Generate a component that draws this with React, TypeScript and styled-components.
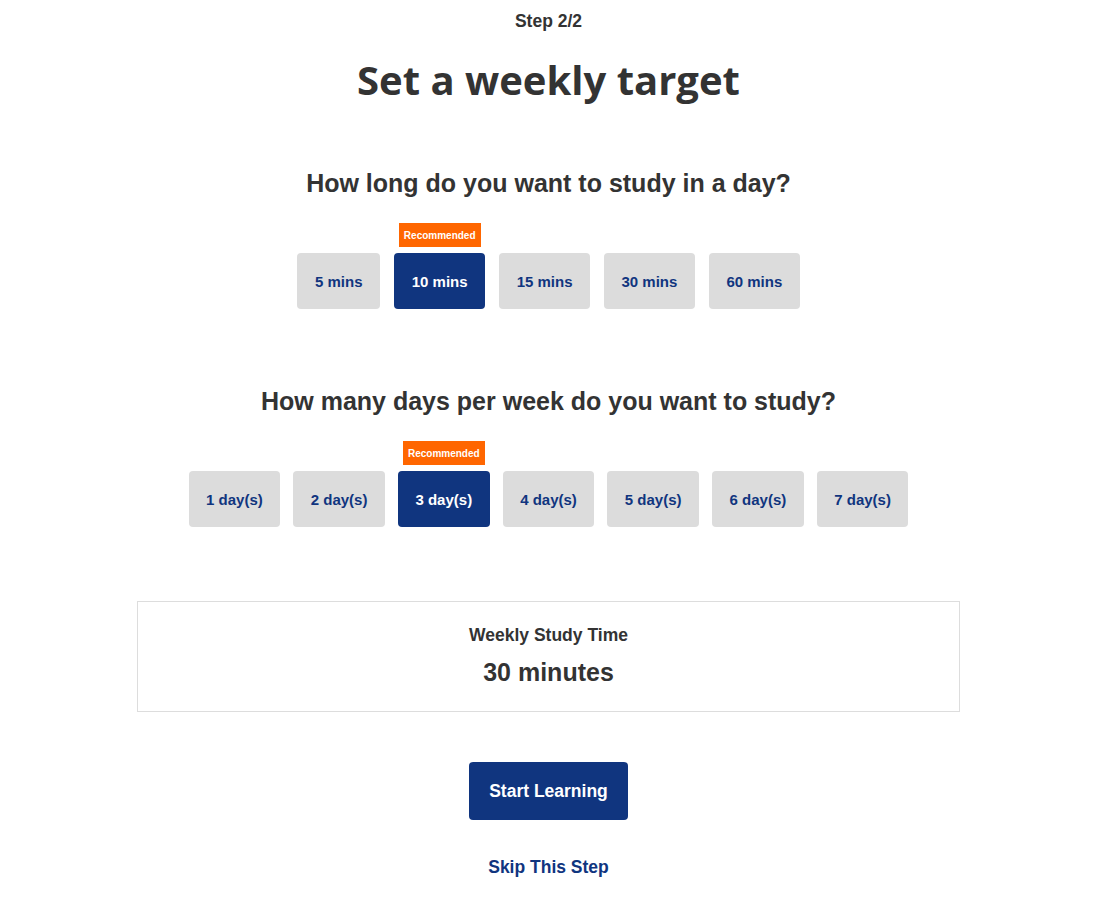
import React, { useState } from "react";
import styled, { createGlobalStyle } from "styled-components";

const NAVY = "#10357f";
const DARK = "#333333";

const GlobalStyle = createGlobalStyle`
  html, body {
    margin: 0;
    padding: 0;
    background: #ffffff;
  }
  body {
    font-family: "Liberation Sans", Arial, sans-serif;
    color: ${DARK};
  }
`;

const Page = styled.div`
  display: flex;
  flex-direction: column;
  align-items: center;
  padding: 11px 13px 40px 0;
`;

const StepLabel = styled.div`
  font-size: 17.5px;
  line-height: 20px;
  font-weight: 700;
`;

const Title = styled.h1`
  margin: 25px 0 0;
  font-family: "Open Sans", "Noto Sans", sans-serif;
  font-size: 40px;
  line-height: 48px;
  font-weight: 700;
`;

const Question = styled.h2<{ $gap: number }>`
  margin: ${(p) => p.$gap}px 0 0;
  font-size: 25px;
  line-height: 28px;
  font-weight: 700;
`;

const OptionRow = styled.div<{ $gap: number }>`
  display: flex;
  align-items: flex-end;
  gap: ${(p) => p.$gap}px;
  margin-top: 26px;
`;

const OptionSlot = styled.div`
  display: flex;
  flex-direction: column;
  align-items: center;
  gap: 6px;
`;

const Badge = styled.span`
  display: flex;
  align-items: center;
  height: 24px;
  padding: 0 5px;
  background: #ff6600;
  color: #ffffff;
  font-size: 10px;
  font-weight: 700;
`;

const OptionButton = styled.button<{ $active: boolean }>`
  height: 56px;
  padding: 0 17.5px;
  min-width: 83px;
  border: none;
  border-radius: 4px;
  background: ${(p) => (p.$active ? NAVY : "#dcdcdc")};
  color: ${(p) => (p.$active ? "#ffffff" : NAVY)};
  font-family: "Liberation Sans", Arial, sans-serif;
  font-size: 15px;
  font-weight: 700;
  cursor: pointer;
`;

const SummaryBox = styled.div`
  box-sizing: border-box;
  width: 823px;
  height: 111px;
  margin-top: 74px;
  padding-top: 23px;
  border: 1px solid #dddddd;
  display: flex;
  flex-direction: column;
  align-items: center;
`;

const SummaryLabel = styled.div`
  font-size: 17.5px;
  line-height: 20px;
  font-weight: 700;
`;

const SummaryValue = styled.div`
  margin-top: 13px;
  font-size: 25px;
  line-height: 28px;
  font-weight: 700;
`;

const StartButton = styled.button`
  margin-top: 50px;
  width: 159px;
  height: 58px;
  border: none;
  border-radius: 4px;
  background: ${NAVY};
  color: #ffffff;
  font-family: "Liberation Sans", Arial, sans-serif;
  font-size: 17.5px;
  font-weight: 700;
  cursor: pointer;
`;

const SkipLink = styled.a`
  margin-top: 36px;
  font-size: 17.5px;
  line-height: 22px;
  font-weight: 700;
  color: ${NAVY};
  text-decoration: none;
  cursor: pointer;
`;

const minuteOptions = [5, 10, 15, 30, 60];
const dayOptions = [1, 2, 3, 4, 5, 6, 7];

const App: React.FC = () => {
  const [minutes, setMinutes] = useState(10);
  const [days, setDays] = useState(3);

  return (
    <>
      <GlobalStyle />
      <Page>
        <StepLabel>Step 2/2</StepLabel>
        <Title>Set a weekly target</Title>

        <Question $gap={65}>How long do you want to study in a day?</Question>
        <OptionRow $gap={14}>
          {minuteOptions.map((m) => (
            <OptionSlot key={m}>
              {m === 10 && <Badge>Recommended</Badge>}
              <OptionButton $active={minutes === m} onClick={() => setMinutes(m)}>
                {m} mins
              </OptionButton>
            </OptionSlot>
          ))}
        </OptionRow>

        <Question $gap={78}>How many days per week do you want to study?</Question>
        <OptionRow $gap={13}>
          {dayOptions.map((d) => (
            <OptionSlot key={d}>
              {d === 3 && <Badge>Recommended</Badge>}
              <OptionButton $active={days === d} onClick={() => setDays(d)}>
                {d} day(s)
              </OptionButton>
            </OptionSlot>
          ))}
        </OptionRow>

        <SummaryBox>
          <SummaryLabel>Weekly Study Time</SummaryLabel>
          <SummaryValue>{minutes * days} minutes</SummaryValue>
        </SummaryBox>

        <StartButton>Start Learning</StartButton>
        <SkipLink>Skip This Step</SkipLink>
      </Page>
    </>
  );
};

export default App;
